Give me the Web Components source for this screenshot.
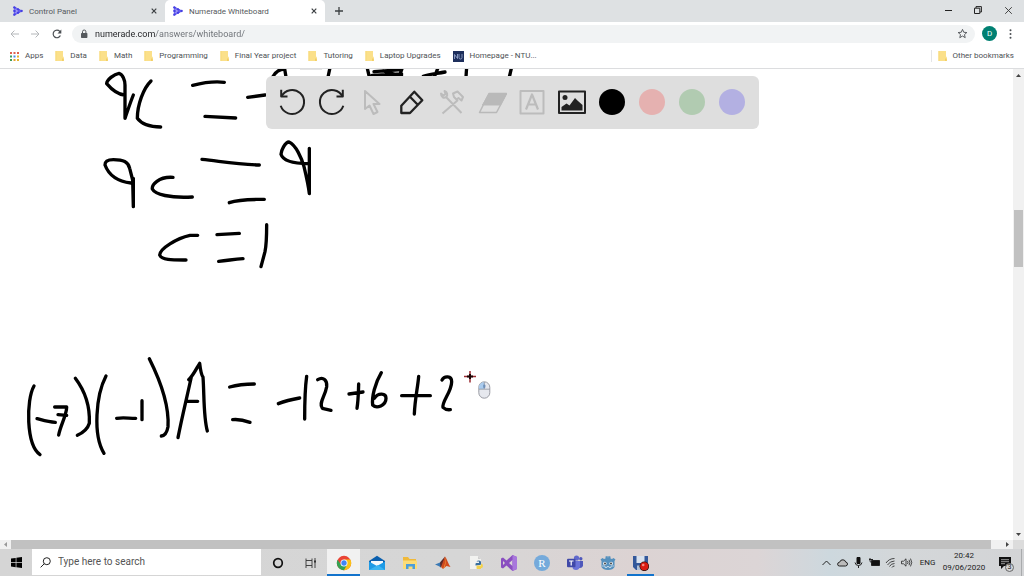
<!DOCTYPE html>
<html lang="en">
<head>
<meta charset="utf-8">
<title>Numerade Whiteboard</title>
<style>
  html, body { margin: 0; height: 100%; }
  body { font-family: Roboto, "Noto Sans", sans-serif; color: #5f6368; background: #fff; overflow: hidden; }
</style>
</head>
<body>
<app-shell></app-shell>

<script>
const base = `<style>
  :host { box-sizing: border-box; }
  *, *::before { box-sizing: border-box; }
  button { border: 0; padding: 0; margin: 0; background: none; font: inherit; color: inherit; display: grid; place-items: center; }
  svg { display: block; }
  a { color: inherit; text-decoration: none; }
</style>`;

function define(name, render) {
  customElements.define(name, class extends HTMLElement {
    connectedCallback() {
      if (this.shadowRoot) return;
      const t = document.createElement('template');
      t.innerHTML = base + render(this);
      this.attachShadow({ mode: 'open' }).append(t.content.cloneNode(true));
    }
  });
}

/* ---------- Browser chrome ---------- */

define('browser-tab', el => `<style>
  :host { display: flex; align-items: center; gap: 6px; width: 160px; padding: 0 7px 0 8px; height: 22px; font-size: 8px; color: #55595d; }
  :host([active]) { background: #fff; border-radius: 5px 5px 0 0; }
  a { flex: 1; white-space: nowrap; }
  button { width: 8px; height: 8px; }
</style>
<svg width="10" height="10" viewBox="0 0 30 30"><path d="M4 3 27 15 4 27Z" fill="#6a62ee" stroke="#5750ea" stroke-width="3" stroke-linejoin="round"/><path d="M4 10 15 15 4 21M12 7l0 16" stroke="#c9c7fb" stroke-width="1.5" fill="none"/><g fill="#4540e4"><circle cx="4" cy="4" r="3.5"/><circle cx="4" cy="15" r="3.5"/><circle cx="4" cy="26" r="3.5"/><circle cx="15" cy="10" r="3.5"/><circle cx="15" cy="20" r="3.5"/><circle cx="26" cy="15" r="3.5"/></g></svg>
<a href="#"><slot></slot></a>
<button aria-label="Close tab"><svg width="6" height="6" viewBox="0 0 6 6"><path d="M.7.7 5.3 5.3M5.3.7.7 5.3" stroke="#3c4043" stroke-width="1.2"/></svg></button>`);

define('tab-strip', () => `<style>
  :host { display: flex; align-items: center; background: #dee1e3; height: 22px; padding-left: 5px; }
  .new { width: 28px; height: 22px; }
  .win { display: flex; margin-left: auto; padding: 0 1px 2px 0; }
  .win button { width: 30px; height: 20px; }
</style>
<browser-tab>Control Panel</browser-tab><browser-tab active>Numerade Whiteboard</browser-tab>
<button class="new" aria-label="New tab"><svg width="8" height="8" viewBox="0 0 8 8"><path d="M4 0v8M0 4h8" stroke="#3c4043" stroke-width="1.3"/></svg></button>
<div class="win">
<button aria-label="Minimise"><svg width="7" height="7" viewBox="0 0 7 7"><path d="M0 3.5h7" stroke="#222"/></svg></button>
<button aria-label="Restore"><svg width="8" height="8" viewBox="0 0 8 8" fill="none" stroke="#222"><path d="M.5 2.2h5.3v5.3H.5zM2 2V.6h5.4V6H6"/></svg></button>
<button aria-label="Close"><svg width="7" height="7" viewBox="0 0 7 7"><path d="M.2.2 6.8 6.8M6.8.2.2 6.8" stroke="#333" stroke-width=".9"/></svg></button>
</div>`);

define('address-bar', () => `<style>
  :host { display: flex; align-items: center; height: 23px; padding: 0 4px; background: #fff; }
  .nav { width: 21px; height: 20px; }
  .box { flex: 1; display: flex; align-items: center; height: 18px; margin: 0 7px 0 5px; border-radius: 9px; background: #f1f3f4; padding: 0 7px 0 8px; gap: 7px; }
  input { flex: 1; min-width: 0; border: 0; padding: 0; outline: 0; font: 9px/18px Roboto, "Noto Sans", sans-serif;
    color: transparent; background: linear-gradient(90deg, #202124 60px, #6b6f74 60px); -webkit-background-clip: text; background-clip: text; }
  .avatar { width: 15px; height: 15px; border-radius: 50%; background: #008072; color: #e8fffb; font-size: 8px; line-height: 15px; }
  .menu { width: 20px; height: 18px; margin-left: 3px; }
</style>
<button class="nav" aria-label="Back"><svg width="9" height="8" viewBox="0 0 9 8" fill="none" stroke="#b4b7ba"><path d="M9 4H1M4.400.6 1 4l3.400 3.400"/></svg></button>
<button class="nav" aria-label="Forward"><svg width="9" height="8" viewBox="0 0 9 8" fill="none" stroke="#b4b7ba"><path d="M0 4h8M4.600.6 8 4 4.600 7.400"/></svg></button>
<button class="nav" aria-label="Reload"><svg width="10" height="10" viewBox="0 0 10 10"><path d="M8.400 6.600A3.800 3.800 0 1 1 7.800 2.400L8.600 3.300" fill="none" stroke="#4b4f53" stroke-width="1.2"/><path d="M9.300.6V4.400H5.500Z" fill="#4b4f53"/></svg></button>
<div class="box">
<svg width="8" height="10" viewBox="0 0 8 10"><rect x="1" y="4" width="6.400" height="5" rx=".7" fill="#55595d"/><path d="M2.500 4V2.700a1.700 1.700 0 0 1 3.400 0V4" fill="none" stroke="#55595d"/></svg>
<input aria-label="Address" value="numerade.com/answers/whiteboard/" spellcheck="false">
<button aria-label="Bookmark this page"><svg width="11" height="11" viewBox="0 0 24 24"><path d="M12 3l2.700 6.300 6.800.6-5.200 4.500 1.600 6.700L12 17.500l-5.900 3.600 1.600-6.700L2.500 9.900l6.800-.6Z" fill="none" stroke="#4b4f53" stroke-width="2"/></svg></button>
</div>
<button class="avatar" aria-label="Profile">D</button>
<button class="menu" aria-label="Menu"><svg width="3" height="10" viewBox="0 0 3 10" fill="#4b4f53"><circle cx="1.500" cy="1.300" r="1"/><circle cx="1.500" cy="5" r="1"/><circle cx="1.500" cy="8.700" r="1"/></svg></button>`);

const markIcons = {
  apps: `<svg width="9" height="9" viewBox="0 0 9 9"><g fill="#e0604f"><rect width="2" height="2"/><rect x="3.500" width="2" height="2"/><rect x="7" width="2" height="2"/></g><rect y="3.500" width="2" height="2" fill="#3f9d58"/><rect x="3.500" y="3.500" width="2" height="2" fill="#4a86e8"/><rect x="7" y="3.500" width="2" height="2" fill="#e6b32c"/><rect y="7" width="2" height="2" fill="#3f9d58"/><rect x="3.500" y="7" width="2" height="2" fill="#e6a02c"/><rect x="7" y="7" width="2" height="2" fill="#e6b32c"/></svg>`,
  folder: `<svg width="9" height="10" viewBox="0 0 9 10"><path d="M.5 0h7.500v5.500L8.800 6v4H.5Z" fill="#fbe08a"/><path d="M.5 0h1v10H.5Z" fill="#f7d978"/><path d="M7 7.500h1.800V10H7Z" fill="#f3cf66"/></svg>`,
  ntu: `<svg width="11" height="11" viewBox="0 0 11 11"><rect width="11" height="11" fill="#1e2f5c"/><path d="M1.500 8V3.500L4.500 7.500V3M6 3v3.500q0 1.500 1.500 1.500T9 6.500V3" fill="none" stroke="#9fb0d6" stroke-width=".8"/></svg>`
};
define('bookmark-link', el => `<style>
  :host { display: block; font-size: 8px; line-height: 12px; }
  a { display: flex; align-items: center; gap: 6px; white-space: nowrap; color: #4d5155; }
</style><a href="#">${markIcons[el.getAttribute('icon') || 'folder']}<slot></slot></a>`);

define('bookmark-bar', () => `<style>
  :host { display: flex; align-items: center; height: 24px; gap: 12px; padding: 0 10px 1px; background: #fff; border-bottom: 1px solid #dcdddf; }
  .other { margin-left: auto; border-left: 1px solid #e4e5e7; padding-left: 6px; }
</style>
<bookmark-link icon="apps">Apps</bookmark-link><bookmark-link>Data</bookmark-link><bookmark-link>Math</bookmark-link><bookmark-link>Programming</bookmark-link><bookmark-link>Final Year project</bookmark-link><bookmark-link>Tutoring</bookmark-link><bookmark-link>Laptop Upgrades</bookmark-link><bookmark-link icon="ntu">Homepage - NTU...</bookmark-link>
<bookmark-link class="other">Other bookmarks</bookmark-link>`);

/* ---------- Whiteboard ---------- */

const tools = [
  ['Undo', '#222', `<path d="M3.700 18.800A12 12 0 1 0 4.400 9.500" stroke-width="2"/><path d="M4.200 2.800V9.600H10.500" stroke-width="2"/>`],
  ['Redo', '#222', `<path d="M26.300 18.800A12 12 0 1 1 25.600 9.500" stroke-width="2"/><path d="M25.800 2.800V9.600H19.500" stroke-width="2"/>`],
  ['Select', '#bcbcbc', `<path d="M8 4V22L12.500 18.500L16.500 27L20.500 25L16.500 17H22.500Z" stroke-width="2"/>`],
  ['Pen', '#222', `<path d="M4.300 26V18.700L17.300 4.700 25.300 13.300 13 26ZM12.700 9.500 21 18" stroke-width="2.300"/>`],
  ['Tools', '#bcbcbc', `<path d="M9 10 24.500 26M21 13 5.500 26.500M4 6.500C4 10.500 7 11.500 9 10 11.500 8 10 5 7.500 4L8.500 7 6.500 8.500ZM16 6.500 20.500 4.500 26 10 24.500 13.500 21.500 11 19.500 12.500 17 10Z" stroke-width="2"/>`],
  ['Eraser', '#b9b9b9', `<path d="M12 6.500H29.500L19.500 25.500H2.500Z" stroke-width="1.500"/><path d="M12 6.500H29.500L23.500 18H5.500Z" fill="#b9b9b9"/>`],
  ['Text', '#bcbcbc', `<path d="M3.500 4H26.500V26.500H3.500Z" stroke-width="2"/><path d="M9 22.500 15 7.500 21 22.500M11 17.500H19" stroke-width="2.200"/>`],
  ['Image', '#222', `<path d="M2 4.500H28V26H2Z" stroke-width="2"/><circle cx="8" cy="10.500" r="2.500" fill="#222" stroke="none"/><path d="M4.500 23.500V20L9.500 16.500 12.500 18.500 18 11 21 14 25.500 18V23.500Z" fill="#222" stroke="none"/>`]
];

define('draw-toolbar', () => `<style>
  :host { display: flex; align-items: center; width: max-content; height: 53px; padding: 0 7px 1px 6px; border-radius: 6px; background: #dedede; }
  button { width: 40px; height: 40px; }
  i { display: block; width: 26px; height: 26px; border-radius: 50%; }
</style>
${tools.map(([n, c, p]) => `<button aria-label="${n}"><svg width="${n === 'Image' ? 32 : 30}" height="30" viewBox="0 0 30 30" fill="none" stroke="${c}" stroke-linejoin="round">${p}</svg></button>`).join('')}
${[['Black', '#000'], ['Red', '#e5b1b0'], ['Green', '#b1cbb1'], ['Blue', '#b3b0e2']].map(([n, c]) => `<button aria-label="${n}"><i style="background:${c}"></i></button>`).join('')}`);

define('hand-writing', () => `<style>:host { display: block; } svg { overflow: visible; }</style>
<svg width="600" height="471" viewBox="0 69 600 471" role="img" aria-label="9c = 9, c = 1, (-7)(-1)A = -12 + 6 + 2">
<g fill="none" stroke="#000" stroke-width="10" stroke-linecap="round" stroke-linejoin="round">
<g transform="translate(90 65) scale(.33333)">
  <path d="M103 90C80 88 62 70 50 56C50 45 72 27 87 25C98 28 105 45 105 60L105 160C112 140 120 115 130 90M183 48C160 70 142 120 142 160C155 178 180 186 212 186"/>
  <path d="M308 61C340 53 370 48 403 52M345 154 437 159M473 97 525 90" />
  <path d="M123 354C90 350 58 335 45 300C45 290 50 284 70 284C100 284 115 290 119 310L128 345L130 425M130 340V425"/>
  <path d="M249 337C205 334 185 360 187 372C195 388 240 400 307 396M336 283C400 290 440 297 508 300M418 413C450 402 480 404 523 403"/>
  <path d="M655 296C615 296 580 290 573 268C573 258 585 231 597 231C618 240 635 280 642 305C648 330 655 360 658 386V250"/>
  <path d="M323 511H300C260 520 210 550 209 570C215 586 250 585 288 585M381 509 448 505M386 589C415 587 430 582 459 581M530 479C530 510 530 535 525 560L513 605"/>
</g>
<g transform="translate(260 65) scale(.33333)">
  <path d="M38 36C48 18 60 12 74 12L78 36M210 8 204 36M321 6 328 36M342 20 425 14M336 31 425 27M370 18 425 34M427 8 418 34M490 34C510 26 530 26 555 21M535 6 524 34M620 6 618 36M755 6 748 36"/>
</g>
<g transform="translate(10 345) scale(.33333)">
  <path d="M72 123C48 165 48 300 90 329M81 221C100 226 115 231 136 232M134 186H170C170 210 152 240 146 270M144 209 170 211M196 100C230 145 240 190 238 235C232 255 218 264 202 271M288 93C258 150 248 270 282 325M320 220C340 217 355 220 377 220M396 167V224M418 41C450 105 478 180 474 245C471 262 465 272 454 273"/>
  <path d="M504 278C515 220 530 160 544 96L536 104C550 92 562 65 569 55C572 80 574 90 579 96C583 150 580 215 592 258M531 169H563M659 126C680 120 700 117 733 117M668 224C688 222 700 225 720 232"/>
</g>
<g transform="translate(260 355) scale(.33333)">
  <path d="M55 146C75 138 90 134 119 129M140 64C135 100 134 150 134 192M173 74C190 64 202 76 200 95C195 125 175 145 187 160L213 166M267 117 309 111M296 87C295 115 295 135 291 160M364 53C345 85 335 125 338 150C350 162 378 152 378 130C378 115 355 112 343 130M425 122H511M476 64C473 100 465 130 463 177M546 75C553 62 575 62 575 80C575 110 545 140 549 157C556 164 563 165 571 164"/>
</g>
</g>
<g stroke="#9a2a30" stroke-width="1.500"><path d="M464 376.500H476M470 371V382.500"/><path d="M467 376.500H473M470 374V379" stroke="#1a0505" stroke-width="2"/></g>
<path d="M300 69H322" stroke="#c9c9c9"/>
<g transform="translate(478 381)"><rect x=".8" y=".8" width="11" height="16.400" rx="5.500" fill="#e6e8ee" stroke="#9a9ca4"/><path d="M6.300 1V8H1V6Q1.500 1.500 6.300 1Z" fill="#a9cbee"/><path d="M1 8.200H11.700M6.300 1V8" stroke="#8e949f" fill="none" stroke-width=".8"/><rect x="5.200" y="3.500" width="2.200" height="3.500" rx="1" fill="#6e8fb8"/></g>
</svg>`);

define('white-board', () => `<style>
  :host { display: grid; grid-template: minmax(0, 1fr) 9px / minmax(0, 1fr) 11px; min-height: 0; background: #fff; }
  .page { position: relative; overflow: hidden; padding: 7px 0 0 11px; }
  hand-writing { position: absolute; inset: 0 auto auto 0; }
  draw-toolbar { position: relative; margin: 0 auto; }
  .v { display: flex; flex-direction: column; justify-content: space-between; background: #f1f1f1; }
  .v button { height: 12px; }
  .space { flex: 129; } .thumb { flex: 57; margin: 0 1px; background: #c1c1c1; } .rest { flex: 260; }
  .h { grid-column: 1 / 3; display: flex; background: #f1f1f1; }
  .h button { width: 11px; }
  .bar { flex: 979; background: #c1c1c1; }
  .after { flex: 11; } .corner { width: 11px; background: #dcdcdc; }
</style>
<div class="page"><hand-writing></hand-writing><draw-toolbar></draw-toolbar></div>
<div class="v"><button aria-label="Scroll up"><svg width="5" height="3" viewBox="0 0 5 3"><path d="M0 3 2.500 0 5 3Z" fill="#444"/></svg></button><div class="space"></div><div class="thumb"></div><div class="rest"></div><button aria-label="Scroll down"><svg width="5" height="3" viewBox="0 0 5 3"><path d="M0 0H5L2.500 3Z" fill="#444"/></svg></button></div>
<div class="h"><button aria-label="Scroll left"><svg width="3" height="5" viewBox="0 0 3 5"><path d="M3 0V5L0 2.500Z" fill="#999"/></svg></button><div class="bar"></div><div class="after"></div><button aria-label="Scroll right"><svg width="3" height="5" viewBox="0 0 3 5"><path d="M0 0V5L3 2.500Z" fill="#444"/></svg></button><div class="corner"></div></div>`);

/* ---------- Windows taskbar ---------- */

const appIcons = {
  Cortana: `<circle cx="8" cy="8" r="4.300" fill="none" stroke="#111" stroke-width="1.700"/>`,
  'Task view': `<path d="M3 3.500V5.500H9V3.500M3 13V10.500H9V13M3 5.500V10.500M9 5.500V10.500M12 3V13" fill="none" stroke="#333" stroke-width=".9"/><path d="M11 5.500h2v2h-2z" fill="#333"/>`,
  Chrome: `<circle cx="8" cy="8" r="7.200" fill="#e94335"/><path d="M1.600 4.700A7.200 7.200 0 0 0 8 15.200L11.300 9.800 8 8 4.900 9.500Z" fill="#34a353"/><path d="M8 4.600H14.400A7.200 7.200 0 0 1 8 15.200L11.200 9.600Z" fill="#fbc116"/><circle cx="8" cy="8" r="3.500" fill="#fff"/><circle cx="8" cy="8" r="2.700" fill="#4285f4"/>`,
  Mail: `<path d="M0 6 8 .8 16 6V15H0Z" fill="#0a5fae"/><path d="M2 6H14V11H2Z" fill="#f3f8fc"/><path d="M0 6.500 8 11 16 6.500V15H0Z" fill="#1d9ae6"/><path d="M0 15 9 10 16 15Z" fill="#39b4f2"/>`,
  Files: `<path d="M1 2H6L7.500 4H14V14H1Z" fill="#f0b93a"/><path d="M1 5.500H15V14H1Z" fill="#fbdc78"/><path d="M4 14V9H13V14H10.500V11.500H6.500V14Z" fill="#4b9ddb"/>`,
  MATLAB: `<path d="M0 9.500 5 7.500 8.500 4 6 12.500 3.500 11Z" fill="#3a79b4"/><path d="M5 7.500 10 1.500 8 10 5.500 12.500Z" fill="#5b2a2a"/><path d="M10 1.500C12 4 13.500 9.500 15.500 12L11.500 11 8 14 6 12Z" fill="#cf4a1e"/><path d="M10 1.500C10.500 6 10.500 9 8 14L9.500 12.500C11 9 11 5 10 1.500Z" fill="#f29a3a"/>`,
  Python: `<path d="M2 1H10L13 4V14H2Z" fill="#f2f2f0"/><path d="M10 1V4H13Z" fill="#cfcfcf"/><path d="M7.500 10.500V9Q7.500 8 8.500 8H11V6.500H8.500Q9 5.500 11 5.500T13 7V9Q13 10 12 10Z" fill="#396f9f"/><path d="M8.500 13V11.500Q8.500 10.500 9.500 10.500H13V8.500Q15 8.500 15 11T13 13V14H9Q8.500 14 8.500 13Z" fill="#f3d24e"/>`,
  'Visual Studio': `<path fill-rule="evenodd" d="M11.500 0 16 2V14L11.500 16 5.500 10.500 2 13.500 0 12.500V3.500L2 2.500 5.500 5.500ZM11.500 5 8 8 11.500 11ZM2 6V10L4 8Z" fill="#8a4fc0"/><path d="M11.500 0 16 2V14L11.500 16Z" fill="#a877dc"/>`,
  RStudio: `<circle cx="8" cy="8" r="8" fill="#75aadb"/><text x="8" y="12" text-anchor="middle" font-family="Liberation Serif, serif" font-size="11" fill="#fff">R</text>`,
  Teams: `<circle cx="9.500" cy="3" r="2.600" fill="#6069cc"/><circle cx="13.800" cy="3.800" r="1.700" fill="#4f58bb"/><path d="M12 6H16V11Q15 13.500 12 13Z" fill="#4f58bb"/><path d="M6 6H13V11Q12.500 15 9 15T5.500 12Z" fill="#6b74d8"/><rect y="3.800" width="8.500" height="8.500" rx="1" fill="#4049a8"/><path d="M2 6H6.500M4.200 6V10.500" stroke="#fff" stroke-width="1.200"/>`,
  Godot: `<path d="M1.500 6 .5 4.500 2.500 3 4 4 5.500 3.500 5.500 1.500 7.500 1 8 3 8.500 1 10.500 1.500V3.500L12 4 13.500 3 15.500 4.500 14.500 6V12Q13 15 8 15T1.500 12Z" fill="#5590bd"/><circle cx="4.800" cy="8.500" r="1.800" fill="#e6eef5"/><circle cx="11.200" cy="8.500" r="1.800" fill="#e6eef5"/><circle cx="5" cy="8.600" r="1" fill="#444"/><circle cx="11" cy="8.600" r="1" fill="#444"/><path d="M2 11H5V12.500H7V11.500H9V12.500H11V11H14" fill="none" stroke="#dce8f2" stroke-width=".7"/>`,
  Recorder: `<path d="M0 1H15V15H3L0 12Z" fill="#33589a"/><path d="M3.500 1H11.500V8H3.500Z" fill="#d9e2ee"/><path d="M4 10.500H8V15H4Z" fill="#aebfd6"/><circle cx="11.300" cy="11.300" r="4.800" fill="#32120f"/><circle cx="11.300" cy="11.300" r="4" fill="#da1c13"/><circle cx="10.200" cy="10" r="1.300" fill="#f38a80"/>`
};
define('task-button', el => {
  const n = el.getAttribute('name');
  return `<style>
  :host { display: block; width: 33px; }
  button { width: 100%; height: 27px; }
  :host([active]) button { background: #f1f1f1; }
  :host([running]) { padding: 0 3px; }
  :host([active]) button, :host([running]) button { border-bottom: 2px solid #1273cc; padding-top: 2px; }
</style><button aria-label="${n}"><svg width="16" height="16" viewBox="0 0 16 16">${appIcons[n]}</svg></button>`;
});

const trayIcons = {
  'Show hidden icons': `<path d="M1.500 8 5.500 4 9.500 8"/>`,
  OneDrive: `<path d="M2.500 9Q.6 9 .6 7.200T2.600 5.200Q3.500 2.500 6 2.800T8.600 5Q10.500 5.200 10.500 7T8.500 9Z" fill="#bbb"/>`,
  Microphone: `<path d="M4 .5H7V6.500H4Z" fill="#111" stroke="#111"/><path d="M2 5.500Q2.500 8.500 5.500 8.500T9 5.500M5.500 8.500V11"/>`,
  Battery: `<path d="M2.500 3.500H10.500V8.500H2.500Z" fill="#111"/><path d="M0 2.500H4M1 1V4.500L3 6"/>`,
  Network: `<path d="M1 6Q4 1.500 9.500 1.500M2.500 8Q5 4 9.500 4M4.500 9.500Q6 6.500 9.500 6.500M7 10.500Q7.500 9 9.500 9" stroke-width=".8"/>`,
  Volume: `<path d="M.5 4.200H2.500L5 1.800V9.200L2.500 6.800H.5ZM6.500 4Q7.500 5.500 6.500 7M8 2.800Q9.800 5.500 8 8.200M9.500 1.600Q12 5.500 9.500 9.400" stroke-width=".8"/>`
};
define('tray-icon', el => {
  const n = el.getAttribute('name');
  return `<style>:host { display: block; } button { width: 16px; height: 27px; }</style>
<button aria-label="${n}"><svg width="12" height="12" viewBox="0 0 12 12" fill="none" stroke="#222">${trayIcons[n]}</svg></button>`;
});

define('task-bar', () => `<style>
  :host { display: flex; align-items: stretch; height: 27px; color: #222; background: linear-gradient(90deg, #d5d5d5 0, #d6d6d6 45%, #dcd3d3 62%, #dcd5d6 74%, #cdd8de 81%, #d4d7d9 88%, #d3d4d6 100%); }
  .start { width: 32px; }
  label { display: flex; align-items: center; gap: 7px; width: 229px; margin-bottom: 1px; padding: 0 8px; background: #fff; }
  input { flex: 1; min-width: 0; border: 0; padding: 0; outline: 0; background: none; font: 10px/16px Roboto, "Noto Sans", sans-serif; color: #555; }
  input::placeholder { color: #555; opacity: 1; }
  .tray { display: flex; align-items: center; margin-left: auto; font-size: 8px; }
  .lang { width: 25px; height: 27px; }
  time { width: 48px; text-align: center; line-height: 12px; padding-bottom: 1px; }
  .note { position: relative; width: 33px; height: 27px; }
  .note b { position: absolute; left: 17px; top: 14px; width: 9px; height: 9px; border-radius: 50%; background: #d4d6d8; border: 1px solid #666; font: 7px/7px Roboto, sans-serif; }
  .desk { width: 3px; height: 27px; border-left: 1px solid #a9abad; }
</style>
<button class="start" aria-label="Start"><svg width="11" height="11" viewBox="0 0 11 11" fill="#000"><path d="M0 1.500 4.700.9V5.200H0ZM5.400.8 11 0V5.200H5.400ZM0 5.900H4.700V10.200L0 9.500ZM5.400 5.900H11V11L5.400 10.300Z"/></svg></button>
<label><svg width="11" height="11" viewBox="0 0 11 11" fill="none" stroke="#222"><circle cx="6.800" cy="4.200" r="3.500"/><path d="M4.300 6.700.6 10.400"/></svg><input type="text" aria-label="Search" placeholder="Type here to search"></label>
${Object.keys(appIcons).map(n => `<task-button name="${n}"${n === 'Chrome' ? ' active' : n === 'Recorder' ? ' running' : ''}></task-button>`).join('')}
<div class="tray">
${Object.keys(trayIcons).map(n => `<tray-icon name="${n}"></tray-icon>`).join('')}
<button class="lang">ENG</button>
<time datetime="2020-06-09T20:42">20:42<br>09/06/2020</time>
<button class="note" aria-label="Notifications"><svg width="12" height="12" viewBox="0 0 12 12"><path d="M0 0H12V9H5L2 12V9H0Z" fill="#111"/><path d="M2 2.700H10M2 4.700H10M2 6.700H6" stroke="#bbb" stroke-width=".8"/></svg><b>3</b></button>
<div class="desk"></div>
</div>`);

define('app-shell', () => `<style>
  :host { display: flex; flex-direction: column; height: 100vh; }
  white-board { flex: 1; }
  tab-strip, address-bar, bookmark-bar, task-bar { flex: none; }
</style>
<tab-strip></tab-strip><address-bar></address-bar><bookmark-bar></bookmark-bar><white-board></white-board><task-bar></task-bar>`);
</script>
</body>
</html>
